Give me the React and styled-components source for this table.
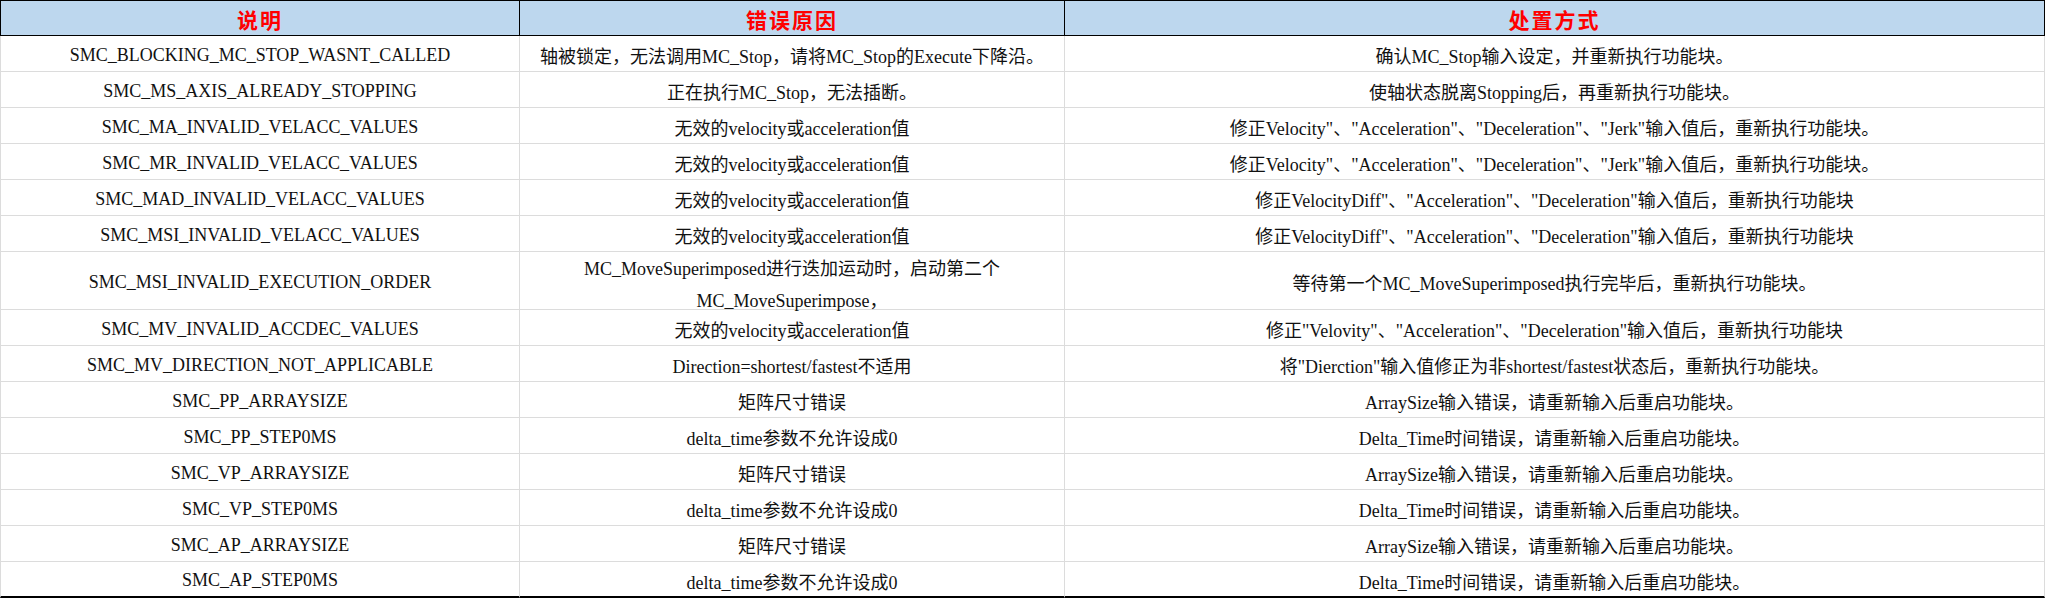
import React from 'react';
import styled, { createGlobalStyle } from 'styled-components';

const rows = [
  ['SMC_BLOCKING_MC_STOP_WASNT_CALLED', '轴被锁定，无法调用MC_Stop，请将MC_Stop的Execute下降沿。', '确认MC_Stop输入设定，并重新执行功能块。'],
  ['SMC_MS_AXIS_ALREADY_STOPPING', '正在执行MC_Stop，无法插断。', '使轴状态脱离Stopping后，再重新执行功能块。'],
  ['SMC_MA_INVALID_VELACC_VALUES', '无效的velocity或acceleration值', '修正Velocity"、"Acceleration"、"Deceleration"、"Jerk"输入值后，重新执行功能块。'],
  ['SMC_MR_INVALID_VELACC_VALUES', '无效的velocity或acceleration值', '修正Velocity"、"Acceleration"、"Deceleration"、"Jerk"输入值后，重新执行功能块。'],
  ['SMC_MAD_INVALID_VELACC_VALUES', '无效的velocity或acceleration值', '修正VelocityDiff"、"Acceleration"、"Deceleration"输入值后，重新执行功能块'],
  ['SMC_MSI_INVALID_VELACC_VALUES', '无效的velocity或acceleration值', '修正VelocityDiff"、"Acceleration"、"Deceleration"输入值后，重新执行功能块'],
  ['SMC_MSI_INVALID_EXECUTION_ORDER', ['MC_MoveSuperimposed进行迭加运动时，启动第二个', 'MC_MoveSuperimpose，'], '等待第一个MC_MoveSuperimposed执行完毕后，重新执行功能块。'],
  ['SMC_MV_INVALID_ACCDEC_VALUES', '无效的velocity或acceleration值', '修正"Velovity"、"Acceleration"、"Deceleration"输入值后，重新执行功能块'],
  ['SMC_MV_DIRECTION_NOT_APPLICABLE', 'Direction=shortest/fastest不适用', '将"Dierction"输入值修正为非shortest/fastest状态后，重新执行功能块。'],
  ['SMC_PP_ARRAYSIZE', '矩阵尺寸错误', 'ArraySize输入错误，请重新输入后重启功能块。'],
  ['SMC_PP_STEP0MS', 'delta_time参数不允许设成0', 'Delta_Time时间错误，请重新输入后重启功能块。'],
  ['SMC_VP_ARRAYSIZE', '矩阵尺寸错误', 'ArraySize输入错误，请重新输入后重启功能块。'],
  ['SMC_VP_STEP0MS', 'delta_time参数不允许设成0', 'Delta_Time时间错误，请重新输入后重启功能块。'],
  ['SMC_AP_ARRAYSIZE', '矩阵尺寸错误', 'ArraySize输入错误，请重新输入后重启功能块。'],
  ['SMC_AP_STEP0MS', 'delta_time参数不允许设成0', 'Delta_Time时间错误，请重新输入后重启功能块。'],
];

const headers = ['说明', '错误原因', '处置方式'];

export default function App() {
  return (
    <>
      <GlobalStyle />
      <Table>
        {headers.map((h, i) => (
          <HeadCell key={h} first={i === 0}>{h}</HeadCell>
        ))}
        {rows.map((row, r) =>
          row.map((text, c) => (
            <Cell key={`${r}-${c}`} first={c === 0} last={r === rows.length - 1}>
              {Array.isArray(text) ? (
                <Wrapped>
                  {text.map((line) => (
                    <div key={line}>{line}</div>
                  ))}
                </Wrapped>
              ) : (
                text
              )}
            </Cell>
          ))
        )}
      </Table>
    </>
  );
}

const GlobalStyle = createGlobalStyle`
  html, body {
    margin: 0;
    padding: 0;
    background: #fff;
  }
`;

// 行高: 表头 36, 普通行 36, 第 7 行两行文字 58
const Table = styled.div`
  display: grid;
  grid-template-columns: 520px 545px 980px;
  grid-template-rows: 36px repeat(6, 36px) 58px repeat(8, 36px);
  width: 2045px;
  font-family: "Liberation Serif", "Noto Sans CJK SC", serif;
  font-size: 18px;
  color: #111;
`;

const HeadCell = styled.div`
  box-sizing: border-box;
  display: flex;
  align-items: center;
  justify-content: center;
  background: #bdd7ee;
  border-top: 1px solid #000;
  border-bottom: 1.5px solid #000;
  border-right: 1px solid #000;
  border-left: ${({ first }) => (first ? '1px solid #000' : 'none')};
  color: #ff0000;
  font-family: "Noto Sans CJK SC", "Liberation Serif", serif;
  font-weight: 700;
  font-size: 21px;
  letter-spacing: 2px;
  padding-top: 1px;
`;

const Cell = styled.div`
  box-sizing: border-box;
  display: flex;
  align-items: center;
  justify-content: center;
  text-align: center;
  white-space: nowrap;
  padding-top: 3px;
  border-right: 1px solid #dcdcdc;
  border-left: ${({ first }) => (first ? '1px solid #dcdcdc' : 'none')};
  border-bottom: ${({ last }) => (last ? '2px solid #000' : '1px solid #dcdcdc')};
`;

const Wrapped = styled.div`
  line-height: 32px;
  margin-top: 6px;
`;
